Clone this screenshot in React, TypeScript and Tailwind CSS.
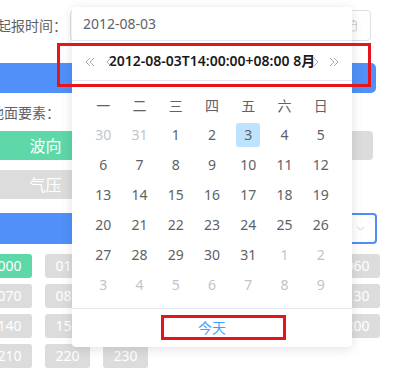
import { Calendar, ChevronDown } from 'lucide-react';

const WEEKDAYS = ['一', '二', '三', '四', '五', '六', '日'];

type Day = { n: number; muted?: boolean; active?: boolean };

function buildDays(): Day[] {
  const days: Day[] = [{ n: 30, muted: true }, { n: 31, muted: true }];
  for (let i = 1; i <= 31; i++) days.push({ n: i, active: i === 3 });
  for (let i = 1; i <= 9; i++) days.push({ n: i, muted: true });
  return days;
}

const HOURS = Array.from({ length: 24 }, (_, i) => String(i * 10).padStart(3, '0'));

function DoubleArrow({ dir }: { dir: 'left' | 'right' }) {
  const d = dir === 'left' ? 'M5 1 L1 5 L5 9 M9 1 L5 5 L9 9' : 'M1 1 L5 5 L1 9 M5 1 L9 5 L5 9';
  return (
    <svg width="10" height="10" viewBox="0 0 10 10" fill="none" stroke="#a8abb2" strokeWidth="1">
      <path d={d} />
    </svg>
  );
}

function SingleArrow({ dir }: { dir: 'left' | 'right' }) {
  const d = dir === 'left' ? 'M5 1 L1 5 L5 9' : 'M1 1 L5 5 L1 9';
  return (
    <svg width="6" height="10" viewBox="0 0 6 10" fill="none" stroke="#a8abb2" strokeWidth="1">
      <path d={d} />
    </svg>
  );
}

function DatePopup() {
  const days = buildDays();
  return (
    <div className="absolute left-[72px] top-[7px] flex h-[340px] w-[280px] flex-col rounded-[4px] bg-white shadow-[0_2px_12px_0_rgba(0,0,0,0.12)]">
      <div className="flex h-[34px] items-center border-b border-[#e4e7ed] pl-[11px] text-sm text-[#606266]">
        2012-08-03
      </div>
      <div className="relative flex h-[40px] items-center justify-center border-b border-[#e4e7ed]">
        <span className="absolute left-[13px] top-[16px]">
          <DoubleArrow dir="left" />
        </span>
        <span className="absolute left-[34px] top-[16px]">
          <SingleArrow dir="left" />
        </span>
        <span className="whitespace-nowrap text-sm font-semibold text-[#1a1a1a]">
          2012-08-03T14:00:00+08:00 8月
        </span>
        <span className="absolute left-[241px] top-[16px]">
          <SingleArrow dir="right" />
        </span>
        <span className="absolute left-[257px] top-[16px]">
          <DoubleArrow dir="right" />
        </span>
      </div>
      <div className="px-[13px] pt-[11px]">
        <div className="grid h-[28px] grid-cols-7 items-center text-center text-sm text-[#606266]">
          {WEEKDAYS.map(w => (
            <span key={w}>{w}</span>
          ))}
        </div>
        <div className="grid grid-cols-7 text-sm">
          {days.map((d, i) => (
            <div key={i} className="flex h-[30px] items-center justify-center">
              <span
                className={`flex h-[24px] w-[24px] items-center justify-center rounded-[2px] ${
                  d.active ? 'bg-[#bde3ff] text-[#606266]' : d.muted ? 'text-[#c0c4cc]' : 'text-[#606266]'
                }`}
              >
                {d.n}
              </span>
            </div>
          ))}
        </div>
      </div>
      <div className="mt-[8px] flex h-[39px] items-center justify-center border-t border-[#e4e7ed] text-sm text-[#409eff]">
        今天
      </div>
    </div>
  );
}

export default function App() {
  return (
    <div className="relative h-[386px] w-[403px] overflow-hidden bg-white font-['Noto_Sans','Noto_Sans_CJK_SC',sans-serif]">
      <div className="flex flex-col pt-[10px]">
        <div className="flex h-[31px] items-center">
          <span className="-ml-[3px] w-[73px] shrink-0 whitespace-nowrap text-sm text-[#606266]">起报时间：</span>
          <div className="flex h-[31px] w-[301px] items-center justify-end rounded-[4px] border border-[#dcdfe6] pr-[12px]">
            <Calendar size={13} color="#c0c4cc" strokeWidth={1.5} />
          </div>
        </div>

        <div className="-ml-[10px] mt-[22px] h-[30px] w-[386px] rounded-[5px] bg-[#5090f8]" />

        <div className="-ml-[10px] mt-[10px] flex h-[20px] items-center whitespace-nowrap text-sm text-[#606266]">
          地面要素：
        </div>

        <div className="-ml-[14px] mt-[8px] flex h-[29px] w-[387px] justify-between">
          <div className="flex w-[119px] items-center justify-center rounded-[4px] bg-[#5ed8a8] text-base text-white">
            波向
          </div>
          <div className="w-[119px] rounded-[4px] bg-[#dcdcdc]" />
        </div>

        <div className="-ml-[14px] mt-[10px] flex h-[29px] w-[119px] items-center justify-center rounded-[4px] bg-[#dcdcdc] text-base text-white">
          气压
        </div>

        <div className="-ml-[10px] mt-[14px] flex h-[31px] w-[387px]">
          <div className="w-[180px] rounded-l-[4px] bg-[#5090f8]" />
          <div className="flex flex-1 items-center justify-end rounded-[4px] border-2 border-[#4d8ff7] bg-white pr-[8px]">
            <ChevronDown size={13} color="#c0c4cc" strokeWidth={1.5} />
          </div>
        </div>

        <div className="-ml-[13px] mt-[10px] grid w-[393px] grid-cols-[repeat(7,45px)] gap-x-[13px] gap-y-[6px]">
          {HOURS.map((h, i) => (
            <div
              key={h}
              className={`flex h-[24px] items-center justify-center rounded-[3px] text-sm text-white ${
                i === 0 ? 'bg-[#5ed8a8]' : 'bg-[#dcdcdc]'
              }`}
            >
              {h}
            </div>
          ))}
        </div>
      </div>

      <DatePopup />

      <div className="absolute left-[57px] top-[43px] h-[44px] w-[314px] border-[3px] border-[#e8141c]" />
      <div className="absolute left-[161px] top-[315px] h-[25px] w-[125px] border-[3px] border-[#e8141c]" />
    </div>
  );
}
